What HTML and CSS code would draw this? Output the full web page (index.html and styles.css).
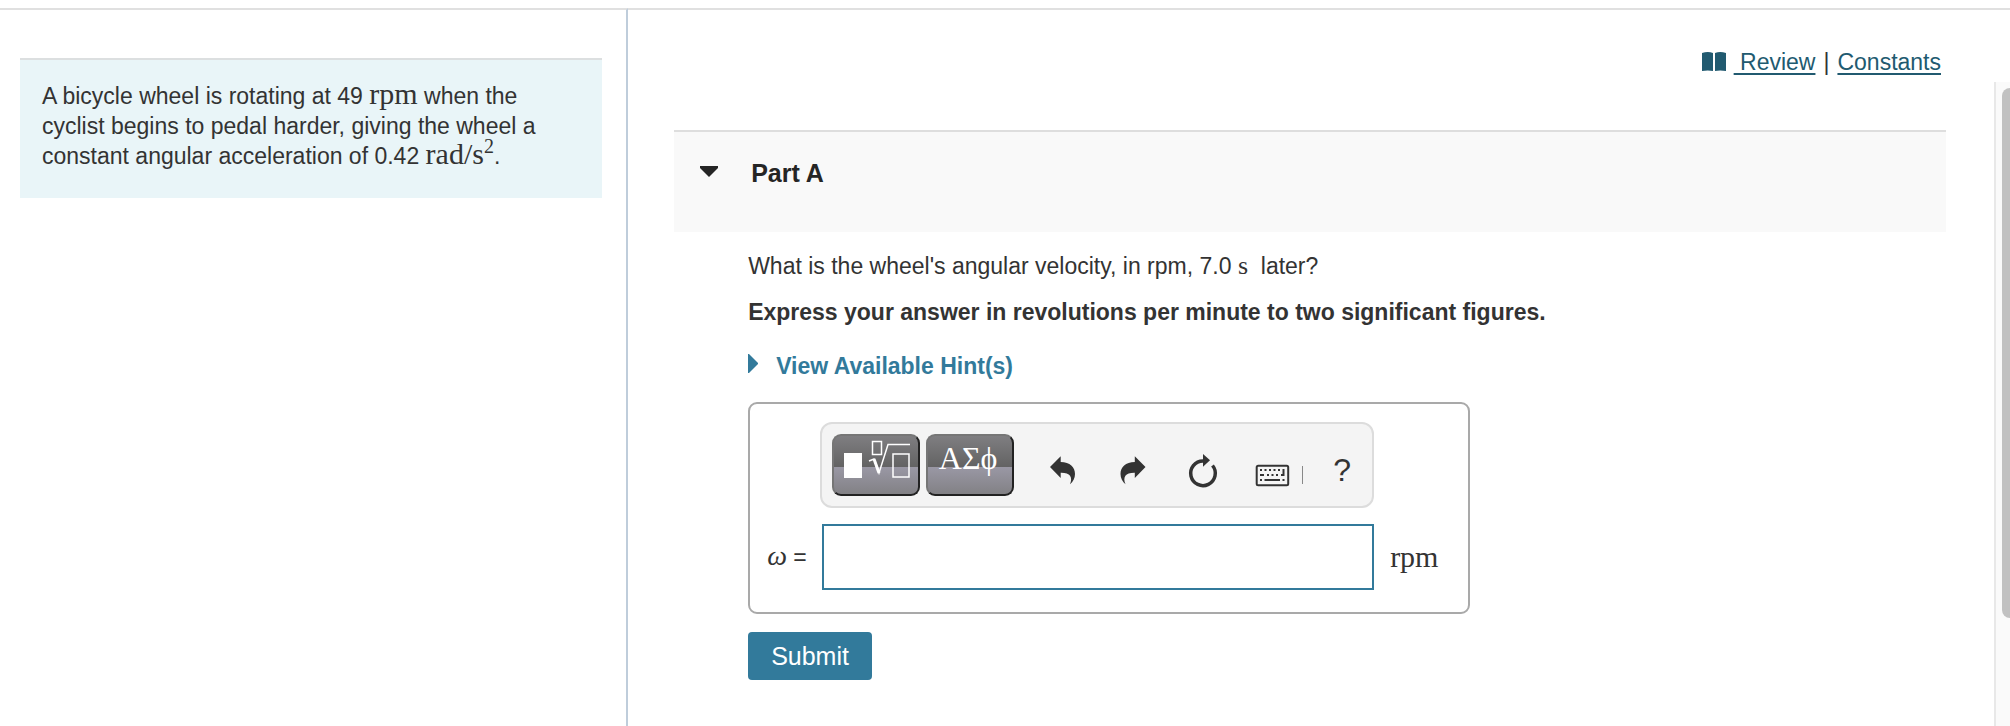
FILE: index.html
```
<!DOCTYPE html>
<html lang="en">
<head>
    <meta charset="UTF-8">
    <meta name="viewport" content="width=device-width, initial-scale=1.0">
    <title>Part A</title>
    <link rel="stylesheet" href="styles.css">
</head>
<body>

    <div class="page">
        <aside class="problem">
            <p class="problem-text">A bicycle wheel is rotating at 49 <span class="math">rpm</span> when the cyclist begins to pedal harder, giving the wheel a constant angular acceleration of 0.42 <span class="math">rad/s<sup>2</sup></span>.</p>
        </aside>

        <main class="work">
            <div class="content">
                <nav class="links">
                    <svg class="book" width="24" height="20" viewBox="0 0 24 20">
                        <path d="M0 1 Q6 -1 11 1 V19 Q6 18 0 19 Z M13 1 Q18 -1 24 1 V19 Q18 18 13 19 Z"/>
                    </svg>
                    <a href="#review">&nbsp;Review</a>
                    <span>|</span>
                    <a href="#constants">Constants</a>
                </nav>

                <header class="part">
                    <svg width="18" height="11" viewBox="0 0 18 11"><path d="M0 0 H18 V2 L9 11 L0 2 Z"/></svg>
                    <h2>Part A</h2>
                </header>

                <section class="question">
                    <p>What is the wheel's angular velocity, in rpm, 7.0 <span class="math-small">s</span>&nbsp; later?</p>
                    <p class="express">Express your answer in revolutions per minute to two significant figures.</p>
                    <a class="hints" href="#hints">
                        <svg width="10" height="19" viewBox="0 0 10 19"><path d="M0 0 H1 L10 9 V10 L1 19 H0 Z"/></svg>
                        View Available Hint(s)
                    </a>

                    <form>
                        <div class="answer">
                            <div class="toolbar">
                                <button type="button" class="tool" aria-label="Templates">
                                    <svg width="84" height="58" viewBox="0 0 84 58">
                                        <rect class="solid" x="10" y="17" width="18" height="25"/>
                                        <rect x="38.5" y="5.5" width="9" height="13"/>
                                        <path d="M35 25 L40 23 L45 37 L54 8.5 H76"/>
                                        <path class="thick" d="M40 23 L45 37"/>
                                        <rect x="59" y="18" width="16" height="23"/>
                                    </svg>
                                </button>
                                <button type="button" class="tool greek" aria-label="Symbols">ΑΣϕ</button>
                                <div class="icons">
                                    <button type="button" class="icon" aria-label="Undo">
                                        <svg width="40" height="62" viewBox="0 0 40 62"><path d="M7 33 L17.700 22.300 V28 C27 28 32 33 32 40 C32 44 30 48 27 50.300 C30 43 27 38.500 17.700 38.700 V44 Z"/></svg>
                                    </button>
                                    <button type="button" class="icon" aria-label="Redo">
                                        <svg width="40" height="62" viewBox="0 0 40 62"><path d="M32.500 33 L21.800 22.300 V28 C12.500 28 7.500 33 7.500 40 C7.500 44 9.500 48 12.500 50.300 C9.500 43 12.500 38.500 21.800 38.700 V44 Z"/></svg>
                                    </button>
                                    <button type="button" class="icon" aria-label="Reset">
                                        <svg width="40" height="62" viewBox="0 0 40 62">
                                            <path class="ring" d="M20 27 A12.300 12.300 0 1 0 29.500 31.500"/>
                                            <path d="M20 20 L27 26.300 L20 32.700 Z"/>
                                        </svg>
                                    </button>
                                    <button type="button" class="icon" aria-label="Keyboard">
                                        <svg width="40" height="62" viewBox="0 0 40 62">
                                            <rect class="case" x="3.700" y="31.700" width="31.500" height="19.500" rx="1.500"/>
                                            <path d="M7 35h2v2h-2z M11.500 35h2v2h-2z M16 35h2v2h-2z M20.500 35h2v2h-2z M25 35h2v2h-2z M29.500 35h2v7h-3.500v-2h1.500z M7 40h4v2h-4z M14 40h2v2h-2z M18.500 40h2v2h-2z M23 40h2v2h-2z M7 45h2v2h-2z M11.500 45h15.500v2h-15.500z M29.500 45h2v2h-2z"/>
                                        </svg>
                                    </button>
                                </div>
                                <span class="divider"></span>
                                <button type="button" class="help" aria-label="Help">?</button>
                            </div>
                            <label for="omega"><i>ω</i> =</label>
                            <input type="text" id="omega">
                            <span class="unit">rpm</span>
                        </div>
                        <button type="submit" class="submit">Submit</button>
                    </form>
                </section>
            </div>

            <div class="scroll"><div class="thumb"></div></div>
        </main>
    </div>

</body>
</html>
```
FILE: styles.css
```
* {
    box-sizing: border-box;
}

body {
    margin: 0;
    background-color: #fff;
    color: #333;
    font-family: "Liberation Sans", Arial, sans-serif;
    font-size: 23px;
    line-height: 30px;
}

p, h2 {
    margin: 0;
}

button {
    font-family: inherit;
    padding: 0;
    cursor: pointer;
}

.page {
    display: grid;
    grid-template-columns: 5fr 11fr;
    min-height: 100vh;
    padding-top: 8px;
}

/* left side */
.problem {
    border-top: 2px solid #e0e0e0;
    border-right: 2px solid #bfcddb;
    padding: 48px 24px 0 20px;
}

.problem-text {
    background-color: #e9f5f8;
    border-top: 2px solid #dcdfe0;
    padding: 21px 22px 27px;
}

.math {
    font-family: "Liberation Serif", serif;
    font-size: 30px;
    line-height: 24px;
}

.math sup {
    font-size: 20px;
    line-height: 0;
}

.math-small {
    font-family: "Liberation Serif", serif;
    font-size: 26px;
    line-height: 24px;
}

/* right side */
.work {
    display: flex;
    border-top: 2px solid #e0e0e0;
}

.content {
    flex: 1;
    padding: 37px 48px 0 46px;
}

.links {
    display: flex;
    justify-content: flex-end;
    align-items: center;
    gap: 8px;
    padding-right: 5px;
    margin-bottom: 53px;
}

.links a {
    color: #215a70;
    text-decoration-thickness: 2px;
    text-underline-offset: 3px;
}

.book {
    fill: #215a70;
}

.part {
    display: flex;
    align-items: center;
    gap: 33px;
    background-color: #f9f9f9;
    border-top: 2px solid #dedede;
    padding: 26px 26px 44px;
    color: #252525;
}

.part svg {
    margin-bottom: 4px;
    fill: #252525;
}

.part h2 {
    font-size: 25px;
}

.question {
    padding: 19px 0 0 74px;
}

.express {
    font-weight: bold;
    margin-top: 16px;
}

.hints {
    display: flex;
    align-items: center;
    gap: 18px;
    margin: 24px 0 21px;
    color: #327a9b;
    font-weight: bold;
    text-decoration: none;
}

.hints svg {
    margin-bottom: 6px;
    fill: #327a9b;
}

/* answer box */
.answer {
    display: grid;
    grid-template-columns: 70px 1fr 94px;
    row-gap: 16px;
    align-items: center;
    max-width: 722px;
    border: 2px solid #a9a9a9;
    border-radius: 9px;
    padding: 18px 0 22px;
}

.toolbar {
    grid-column: 2;
    display: flex;
    gap: 6px;
    padding: 10px;
    background-color: #f4f4f4;
    border: 2px solid #dcdcdc;
    border-radius: 12px;
}

.tool {
    width: 88px;
    height: 62px;
    border: 2px solid;
    border-color: #767676 #222 #222 #767676;
    border-radius: 9px;
    background: linear-gradient(#7f7e81, #636363 53%, #9a98a5 53%, #828185);
    color: #fff;
}

.tool svg {
    display: block;
    fill: none;
    stroke: #fff;
    stroke-width: 1.5;
}

.tool .solid {
    fill: #fff;
    stroke: none;
}

.tool .thick {
    stroke-width: 3;
}

.greek {
    font-family: "Liberation Serif", serif;
    font-size: 32px;
    padding: 0 4px 14px 0;
}

.icons {
    display: flex;
    gap: 30px;
    margin-left: 23px;
}

.icon, .help {
    width: 40px;
    height: 62px;
    border: 0;
    background: none;
    color: #333;
}

.icon svg {
    display: block;
    fill: #333;
}

.icon .ring {
    fill: none;
    stroke: #333;
    stroke-width: 3.5;
}

.icon .case {
    fill: none;
    stroke: #333;
    stroke-width: 2;
}

.divider {
    width: 1px;
    height: 18px;
    margin: 32px 13px 0 3px;
    background-color: #888;
}

.help {
    font-size: 32px;
    padding-top: 10px;
}

.answer label {
    grid-column: 1;
    padding-left: 17px;
}

.answer label i {
    font-family: "Liberation Serif", serif;
    font-size: 28px;
    line-height: 24px;
}

.answer input {
    height: 66px;
    min-width: 0;
    margin-left: 2px;
    padding: 0 12px;
    border: 2px solid #327a9b;
    border-radius: 0;
    background-color: #fff;
    font: inherit;
}

.unit {
    padding-left: 16px;
    font-family: "Liberation Serif", serif;
    font-size: 30px;
}

.submit {
    margin-top: 18px;
    padding: 9px 23px;
    border: 0;
    border-radius: 4px;
    background-color: #327a9b;
    color: #fff;
    font-size: 25px;
    line-height: 30px;
}

.scroll {
    width: 16px;
    margin-top: 72px;
    padding: 6px 0 0 6px;
    border-left: 2px solid #e8e8e8;
    background-color: #fafafa;
}

.thumb {
    height: 83%;
    background-color: #c1c1c1;
    border-radius: 8px 0 0 8px;
}
```
